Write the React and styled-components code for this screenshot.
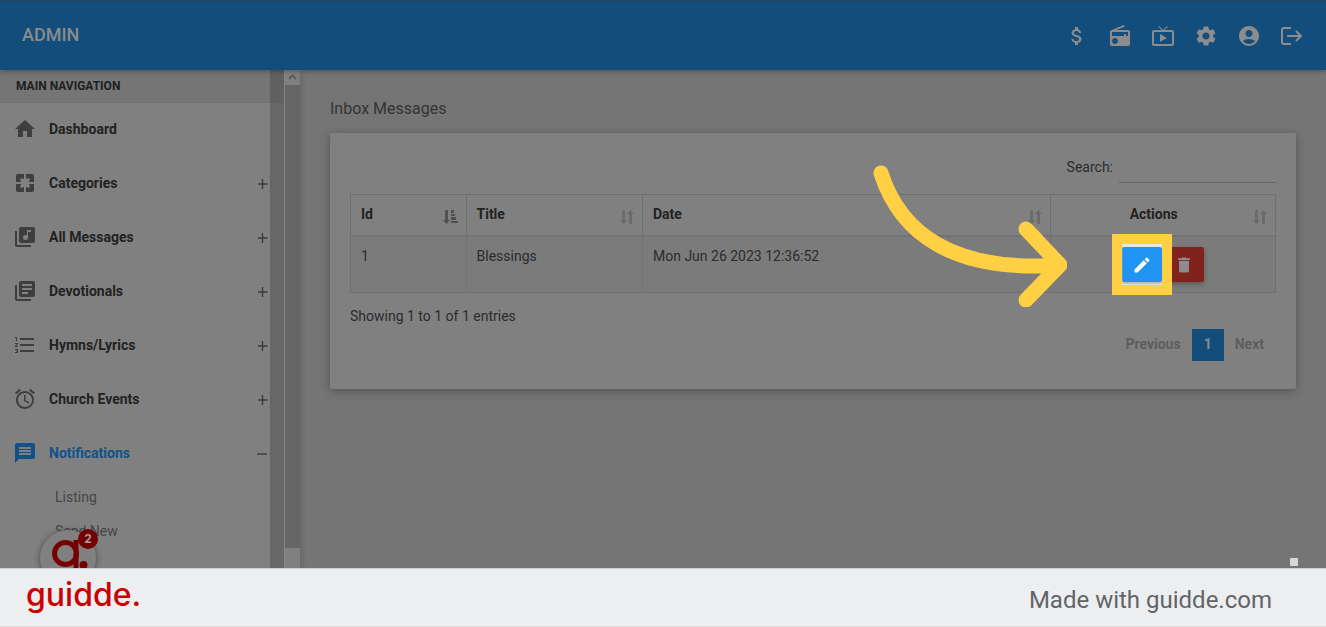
import React from "react";
import styled, { createGlobalStyle } from "styled-components";
import {
  MdAttachMoney, MdRadio, MdLiveTv, MdSettings, MdAccountCircle, MdHome, MdPages,
  MdLibraryMusic, MdLibraryBooks, MdFormatListNumbered, MdAccessAlarm, MdMessage,
  MdEdit, MdDelete,
} from "react-icons/md";

const c = {
  blue: "#124d7c",
  surface: "#808080",
  page: "#757575",
  line: "#6f6f6f",
  text: "#2b2b2f",
  strong: "#222222",
  yellow: "#ffd043",
  red: "#cc0000",
  darkRed: "#760000",
};

const Global = createGlobalStyle`
  * { box-sizing: border-box; }
  body { margin: 0; font-family: Roboto, "Liberation Sans", sans-serif; font-size: 14px; line-height: 20px; color: ${c.text}; }
  button, input { font: inherit; color: inherit; }
  a { color: inherit; text-decoration: none; }
`;

const Shell = styled.div`
  display: flex;
  flex-direction: column;
  height: 100vh;
  overflow: hidden;
  background: ${c.page};
`;

const TopBar = styled.header`
  display: flex;
  flex: none;
  align-items: center;
  justify-content: space-between;
  height: 70px;
  padding: 0 22px 2px;
  background: ${c.blue};
  border-top: 1px solid #26435a;
  box-shadow: 0 1px 5px rgba(0, 0, 0, 0.35);
  color: #8c8c8c;
  z-index: 1;
`;

const Brand = styled.a`
  font-size: 18px;
  line-height: 24px;
  font-weight: 500;
`;

const Tools = styled.nav`
  display: flex;
  gap: 19px;
  padding-top: 2px;
`;

const ToolLink = styled.a`
  display: flex;
  svg { width: 24px; height: 24px; }
`;

const Body = styled.div`
  position: relative;
  display: flex;
  flex: 1;
  min-height: 0;
  overflow: hidden;
`;

const Sidebar = styled.aside`
  display: flex;
  flex: none;
  width: 300px;
  background: ${c.surface};
  box-shadow: 2px 2px 5px rgba(0, 0, 0, 0.12);
`;

const Menu = styled.nav`
  flex: 1;
  overflow: hidden;
`;

const MenuTitle = styled.h2`
  margin: 0;
  padding: 6px 16px;
  height: 33px;
  background: ${c.page};
  border-bottom: 1px solid #717171;
  font-size: 12px;
  line-height: 20px;
  font-weight: 700;
  color: #202020;
`;

const MenuItem = styled.a`
  display: flex;
  align-items: center;
  height: 54px;
  padding: 0 2px 2px 13px;
  color: ${(p) => (p.$active ? "#11518a" : c.strong)};
  font-weight: 700;
  > svg:first-child {
    width: 24px;
    height: 24px;
    margin-right: 12px;
    color: ${(p) => (p.$active ? "#11518a" : "#3e3e3e")};
  }
`;

const MenuLabel = styled.span`
  flex: 1;
`;

const ToggleSign = styled.svg`
  width: 11px;
  height: 11px;
  fill: none;
  stroke: #3a3a3a;
  stroke-width: 1.4;
`;

const SubItem = styled.a`
  display: block;
  padding: 6px 55px 8px;
  color: #464646;
`;

const Gutter = styled.div`
  width: 15px;
  background: #676767;
  border-right: 1px solid #858585;
`;

const GutterTop = styled.div`
  height: 33px;
  background: #606060;
`;

const ScrollTrack = styled.div`
  display: flex;
  flex-direction: column;
  width: 15px;
  background: ${c.surface};
`;

const ScrollArrow = styled.svg`
  width: 15px;
  height: 15px;
  fill: none;
  stroke: #5c5c5c;
  stroke-width: 2;
`;

const ScrollThumb = styled.div`
  flex: 1;
  margin-bottom: 20px;
  background: #666666;
`;

const Main = styled.main`
  flex: 1;
  min-width: 0;
  padding: 29px 30px;
`;

const PageTitle = styled.h1`
  margin: 0 0 14px;
  font-size: 16px;
  line-height: 20px;
  font-weight: 400;
  color: #343434;
`;

const Card = styled.section`
  padding: 20px 20px 28px;
  background: ${c.surface};
  border-radius: 2px;
  box-shadow: 0 2px 10px rgba(0, 0, 0, 0.3);
`;

const SearchRow = styled.label`
  display: flex;
  justify-content: flex-end;
  gap: 6px;
  height: 30px;
  margin-bottom: 11px;
  line-height: 28px;
`;

const SearchInput = styled.input`
  width: 157px;
  padding: 0;
  border: 0;
  border-bottom: 1px solid #666666;
  background: transparent;
  outline: none;
`;

const Table = styled.table`
  width: 100%;
  table-layout: fixed;
  border-collapse: separate;
  border-spacing: 0;
  border: 1px solid ${c.line};
`;

const Th = styled.th`
  height: 42px;
  padding: 8px 4px 8px ${(p) => (p.$last ? "4px" : "10px")};
  border-right: ${(p) => (p.$last ? "0" : `1px solid ${c.line}`)};
  border-bottom: 2px solid #737373;
  font-weight: 700;
  vertical-align: top;
  color: ${c.strong};
`;

const ThContent = styled.div`
  display: flex;
  justify-content: space-between;
  text-align: ${(p) => (p.$center ? "center" : "left")};
  line-height: 22px;
  > span { flex: 1; }
`;

const SortIcon = styled.svg`
  flex: none;
  width: 16px;
  height: 16px;
  margin-top: 6px;
  margin-right: 3px;
  color: ${(p) => (p.$active ? "#505050" : "#6b6b6b")};
`;

const Td = styled.td`
  height: 55px;
  padding: 9px 10px;
  border-right: ${(p) => (p.$last ? "0" : "1px solid #757575")};
  background: #7b7b7b;
  vertical-align: top;
`;

const Actions = styled.div`
  display: flex;
  justify-content: center;
  gap: 2px;
  padding-top: 1px;
`;

const ActionButton = styled.button`
  display: flex;
  align-items: center;
  justify-content: center;
  width: 40px;
  height: 35px;
  padding: 0;
  border: 0;
  border-radius: 2px;
  background: ${(p) => (p.$danger ? "#80231c" : "#2094f3")};
  color: ${(p) => (p.$danger ? "#8c8c8c" : "#ffffff")};
  box-shadow: 0 2px 5px rgba(0, 0, 0, 0.3);
  svg { width: 20px; height: 20px; }
`;

const Spotlight = styled.div`
  position: relative;
  z-index: 2;
`;

const SpotFrame = styled.div`
  position: absolute;
  inset: -13px -10px;
  border: 10px solid ${c.yellow};
  background: #e6e6e6;
`;

const SpotButton = styled(ActionButton)`
  position: relative;
  box-shadow: 0 2px 2px rgba(0, 0, 0, 0.2);
  clip-path: inset(0 0 -3px 0);
`;

const Pointer = styled.svg`
  position: absolute;
  right: 95px;
  top: -84px;
  width: 196px;
  height: 144px;
  fill: none;
  stroke: ${c.yellow};
  stroke-width: 15;
  stroke-linecap: round;
  stroke-linejoin: round;
  pointer-events: none;
`;

const Summary = styled.p`
  margin: 13px 0 3px;
`;

const Pager = styled.nav`
  display: flex;
  justify-content: flex-end;
  padding-right: 1px;
`;

const PageButton = styled.button`
  height: 32px;
  padding: 0 ${(p) => (p.$current ? "12px" : "11px")} 2px;
  border: 0;
  background: ${(p) => (p.$current ? c.blue : "transparent")};
  color: ${(p) => (p.$current ? "#8c8c8c" : "#5d5d5d")};
  font-weight: 700;
`;

const Launcher = styled.button`
  position: absolute;
  left: 40px;
  bottom: -18px;
  width: 56px;
  height: 56px;
  padding: 0;
  border: 0;
  border-radius: 50%;
  background: ${c.surface};
  box-shadow: 0 1px 6px rgba(0, 0, 0, 0.45);
`;

const LauncherMark = styled.svg`
  display: block;
  width: 56px;
  height: 56px;
  fill: none;
  stroke: ${c.darkRed};
  stroke-width: 5;
`;

const Count = styled.span`
  position: absolute;
  top: -1px;
  right: -2px;
  width: 20px;
  height: 20px;
  border-radius: 50%;
  background: ${c.darkRed};
  color: #a0a0a0;
  font-family: Inter, sans-serif;
  font-size: 12px;
  line-height: 20px;
  font-weight: 700;
`;

const Marker = styled.div`
  position: absolute;
  right: 28px;
  bottom: 2px;
  width: 8px;
  height: 8px;
  border-radius: 1px;
  background: #d8d8d8;
`;

const Footer = styled.footer`
  display: flex;
  flex: none;
  align-items: center;
  justify-content: space-between;
  height: 59px;
  padding: 0 54px 0 26px;
  background: #edeef0;
  border-top: 1px solid #cfcfcf;
  border-bottom: 1px solid #d8d8d8;
  color: #626467;
  font-size: 24px;
  line-height: 32px;
  z-index: 1;
`;

const Logo = styled.a`
  padding-bottom: 6px;
  font-family: Inter, sans-serif;
  font-size: 32px;
  line-height: 36px;
  font-weight: 500;
  color: ${c.red};
`;

const MadeWith = styled.span`
  padding-top: 4px;
`;

const LogoutIcon = () => (
  <svg viewBox="0 0 24 24" fill="none" stroke="currentColor" strokeWidth="2" aria-hidden="true">
    <path d="M11 4H4q-2 0-2 2v12q0 2 2 2h7M7 12h14M16 7l5 5-5 5" />
  </svg>
);

const Sort = ({ active }) => (
  <SortIcon $active={active} viewBox="0 0 16 16" fill="currentColor" aria-hidden="true">
    {active ? (
      <path d="M2 1h3v10h2l-3.500 4L0 11h2zM8 1h3v3H8zM8 5h4v2H8zM8 8h5v3H8zM8 12h7v2H8z" />
    ) : (
      <path d="M3 1h3v10h2l-3.500 4L1 11h2zM10 15h3V5h2l-3.500-4L8 5h2z" />
    )}
  </SortIcon>
);

const tools = [
  ["Donations", MdAttachMoney], ["Radio", MdRadio], ["Live TV", MdLiveTv],
  ["Settings", MdSettings], ["Account", MdAccountCircle], ["Log out", LogoutIcon],
];

const menu = [
  ["Dashboard", MdHome, ""],
  ["Categories", MdPages, "plus"],
  ["All Messages", MdLibraryMusic, "plus"],
  ["Devotionals", MdLibraryBooks, "plus"],
  ["Hymns/Lyrics", MdFormatListNumbered, "plus"],
  ["Church Events", MdAccessAlarm, "plus"],
  ["Notifications", MdMessage, "minus"],
];

export default function App() {
  return (
    <Shell>
      <Global />
      <TopBar>
        <Brand href="#">ADMIN</Brand>
        <Tools>
          {tools.map(([label, Icon]) => (
            <ToolLink key={label} href="#" aria-label={label}><Icon /></ToolLink>
          ))}
        </Tools>
      </TopBar>
      <Body>
        <Sidebar>
          <Menu>
            <MenuTitle>MAIN NAVIGATION</MenuTitle>
            {menu.map(([label, Icon, sign]) => (
              <MenuItem key={label} href="#" $active={sign === "minus"}>
                <Icon />
                <MenuLabel>{label}</MenuLabel>
                {sign && (
                  <ToggleSign viewBox="0 0 11 11">
                    <path d={sign === "plus" ? "M1 6h9.500M5.500 1v10" : "M0 6h10"} />
                  </ToggleSign>
                )}
              </MenuItem>
            ))}
            <SubItem href="#">Listing</SubItem>
            <SubItem href="#">Send New</SubItem>
          </Menu>
          <Gutter><GutterTop /></Gutter>
          <ScrollTrack>
            <ScrollArrow viewBox="0 0 15 15"><path d="M4 9l3.500-3.500L11 9" /></ScrollArrow>
            <ScrollThumb />
          </ScrollTrack>
        </Sidebar>
        <Main>
          <PageTitle>Inbox Messages</PageTitle>
          <Card>
            <SearchRow>
              Search:
              <SearchInput type="search" />
            </SearchRow>
            <Table>
              <colgroup>
                <col style={{ width: "12.5%" }} />
                <col style={{ width: "19.1%" }} />
                <col style={{ width: "44.2%" }} />
                <col />
              </colgroup>
              <thead>
                <tr>
                  <Th><ThContent><span>Id</span><Sort active /></ThContent></Th>
                  <Th><ThContent><span>Title</span><Sort /></ThContent></Th>
                  <Th><ThContent><span>Date</span><Sort /></ThContent></Th>
                  <Th $last><ThContent $center><span>Actions</span><Sort /></ThContent></Th>
                </tr>
              </thead>
              <tbody>
                <tr>
                  <Td>1</Td>
                  <Td>Blessings</Td>
                  <Td>Mon Jun 26 2023 12:36:52</Td>
                  <Td $last>
                    <Actions>
                      <Spotlight>
                        <SpotFrame />
                        <SpotButton aria-label="Edit"><MdEdit /></SpotButton>
                        <Pointer viewBox="0 0 196 144" aria-hidden="true">
                          <path d="M10 10C29 70 82 110 189 102M155 66l34 36-34 35" />
                        </Pointer>
                      </Spotlight>
                      <ActionButton $danger aria-label="Delete"><MdDelete /></ActionButton>
                    </Actions>
                  </Td>
                </tr>
              </tbody>
            </Table>
            <Summary>Showing 1 to 1 of 1 entries</Summary>
            <Pager aria-label="Pages">
              <PageButton>Previous</PageButton>
              <PageButton $current>1</PageButton>
              <PageButton>Next</PageButton>
            </Pager>
          </Card>
        </Main>
        <Launcher aria-label="Open guides">
          <LauncherMark viewBox="0 0 56 56" aria-hidden="true">
            <circle cx="25.500" cy="23.500" r="11" />
            <path d="M36 10v36" />
            <circle cx="43.500" cy="35" r="4" fill={c.darkRed} stroke="none" />
          </LauncherMark>
          <Count>2</Count>
        </Launcher>
        <Marker />
      </Body>
      <Footer>
        <Logo href="#">guidde.</Logo>
        <MadeWith>Made with guidde.com</MadeWith>
      </Footer>
    </Shell>
  );
}
